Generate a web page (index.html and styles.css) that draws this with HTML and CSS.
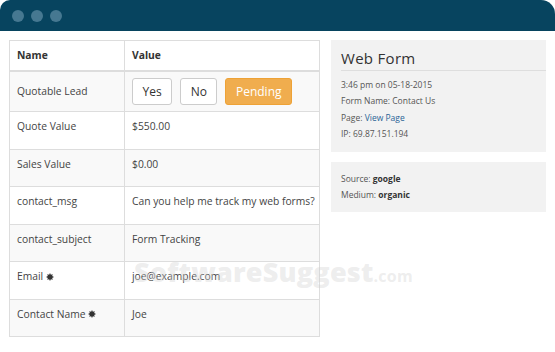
FILE: index.html
```html
<!DOCTYPE html>
<html>
<head>
<meta charset="utf-8">
<link rel="stylesheet" href="styles.css">
</head>
<body>
<div class="window">
  <div class="titlebar">
    <span class="dot"></span><span class="dot"></span><span class="dot"></span>
  </div>
  <div class="content">
    <table class="fields">
      <colgroup><col class="col-name"><col class="col-value"></colgroup>
      <thead>
        <tr><th>Name</th><th>Value</th></tr>
      </thead>
      <tbody>
        <tr class="striped lead">
          <td>Quotable Lead</td>
          <td><div class="btns"><span class="btn">Yes</span><span class="btn">No</span><span class="btn pending">Pending</span></div></td>
        </tr>
        <tr><td>Quote Value</td><td>$550.00</td></tr>
        <tr class="striped"><td>Sales Value</td><td>$0.00</td></tr>
        <tr><td>contact_msg</td><td>Can you help me track my web forms?</td></tr>
        <tr class="striped"><td>contact_subject</td><td>Form Tracking</td></tr>
        <tr><td>Email <svg class="req" viewBox="0 0 10 10"><path d="M5 0 L6.1 2.3 L8.5 1.5 L7.7 3.9 L10 5 L7.7 6.1 L8.5 8.5 L6.1 7.7 L5 10 L3.9 7.7 L1.5 8.5 L2.3 6.1 L0 5 L2.3 3.9 L1.5 1.5 L3.9 2.3 Z"/></svg></td><td>joe@example.com</td></tr>
        <tr class="striped"><td>Contact Name <svg class="req" viewBox="0 0 10 10"><path d="M5 0 L6.1 2.3 L8.5 1.5 L7.7 3.9 L10 5 L7.7 6.1 L8.5 8.5 L6.1 7.7 L5 10 L3.9 7.7 L1.5 8.5 L2.3 6.1 L0 5 L2.3 3.9 L1.5 1.5 L3.9 2.3 Z"/></svg></td><td>Joe</td></tr>
      </tbody>
    </table>
    <div class="side">
      <div class="panel first">
        <h2 class="title">Web Form</h2>
        <div class="lines">
          <p>3:46 pm on 05-18-2015</p>
          <p>Form Name: Contact Us</p>
          <p>Page: <a class="link">View Page</a></p>
          <p>IP: 69.87.151.194</p>
        </div>
      </div>
      <div class="panel second">
        <div class="lines">
          <p>Source: <b>google</b></p>
          <p>Medium: <b>organic</b></p>
        </div>
      </div>
    </div>
  </div>
  <div class="watermark">SoftwareSuggest<span class="dotcom">.com</span></div>
</div>
</body>
</html>
```

FILE: styles.css
```css
* { box-sizing: border-box; }
html, body { margin: 0; padding: 0; background: #fff; }
body { font-family: "Open Sans", "Liberation Sans", sans-serif; color: #444; width: 555px; height: 352px; overflow: hidden; }
.window { position: relative; width: 555px; height: 352px; }
.titlebar {
  height: 31px;
  background: #07445f;
  border-radius: 10px 14px 0 0;
  display: flex;
  align-items: center;
  gap: 7px;
  padding-left: 12px;
}
.dot { width: 12px; height: 12px; border-radius: 50%; background: #467891; }
.content { display: flex; padding: 9px 0 0 9px; gap: 11px; align-items: flex-start; }
.fields { width: 310px; table-layout: fixed; border-collapse: collapse; border: 1px solid #ddd; font-size: 10.3px; }
.col-name { width: 115px; }
.col-value { width: 195px; }
.fields th, .fields td {
  border: 1px solid #ddd;
  padding: 7px 6px 0 7px;
  height: 37.5px;
  line-height: 14px;
  text-align: left;
  vertical-align: top;
  white-space: nowrap;
}
.fields th { font-weight: 700; color: #333; height: 30px; border-bottom: 2px solid #ddd; padding-top: 7px; }
.fields td:nth-child(2), .fields th:nth-child(2) { padding-left: 7px; }
.striped td { background: #f9f9f9; }
.lead td { height: 41px; vertical-align: middle; padding-top: 0; }
.btns { display: flex; gap: 8px; }
.btn {
  display: inline-block;
  height: 27px;
  line-height: 25px;
  padding: 0 9.5px;
  border: 1px solid #ccc;
  border-radius: 3px;
  background: #fff;
  color: #333;
  font-size: 12px;
}
.pending { background: #f0ad4e; border-color: #eea236; color: #fff; }
.req { width: 8px; height: 8px; fill: #333; vertical-align: -0.5px; }
.side { width: 215px; display: flex; flex-direction: column; gap: 10px; }
.panel { background: #f2f2f2; padding-left: 10px; }
.panel.first { height: 112px; padding-top: 8px; }
.title {
  margin: 0;
  font-size: 15px;
  font-weight: 400;
  color: #333;
  line-height: 20px;
  padding-bottom: 2px;
  border-bottom: 1px solid #dedede;
  margin-bottom: 6px;
  letter-spacing: 0.3px;
}
.lines p { margin: 0; font-size: 8.5px; line-height: 16.3px; color: #555; }
.link { color: #2a6496; }
.panel.second { height: 50px; padding-top: 9px; }
.lines b { color: #333; }
.watermark {
  position: absolute;
  left: 134px;
  top: 253px;
  font-family: "Open Sans", sans-serif;
  font-weight: 800;
  font-size: 27px;
  color: rgba(210, 210, 210, 0.4);
  letter-spacing: 0.2px;
  pointer-events: none;
}
.dotcom { font-size: 16px; font-weight: 700; }
```
